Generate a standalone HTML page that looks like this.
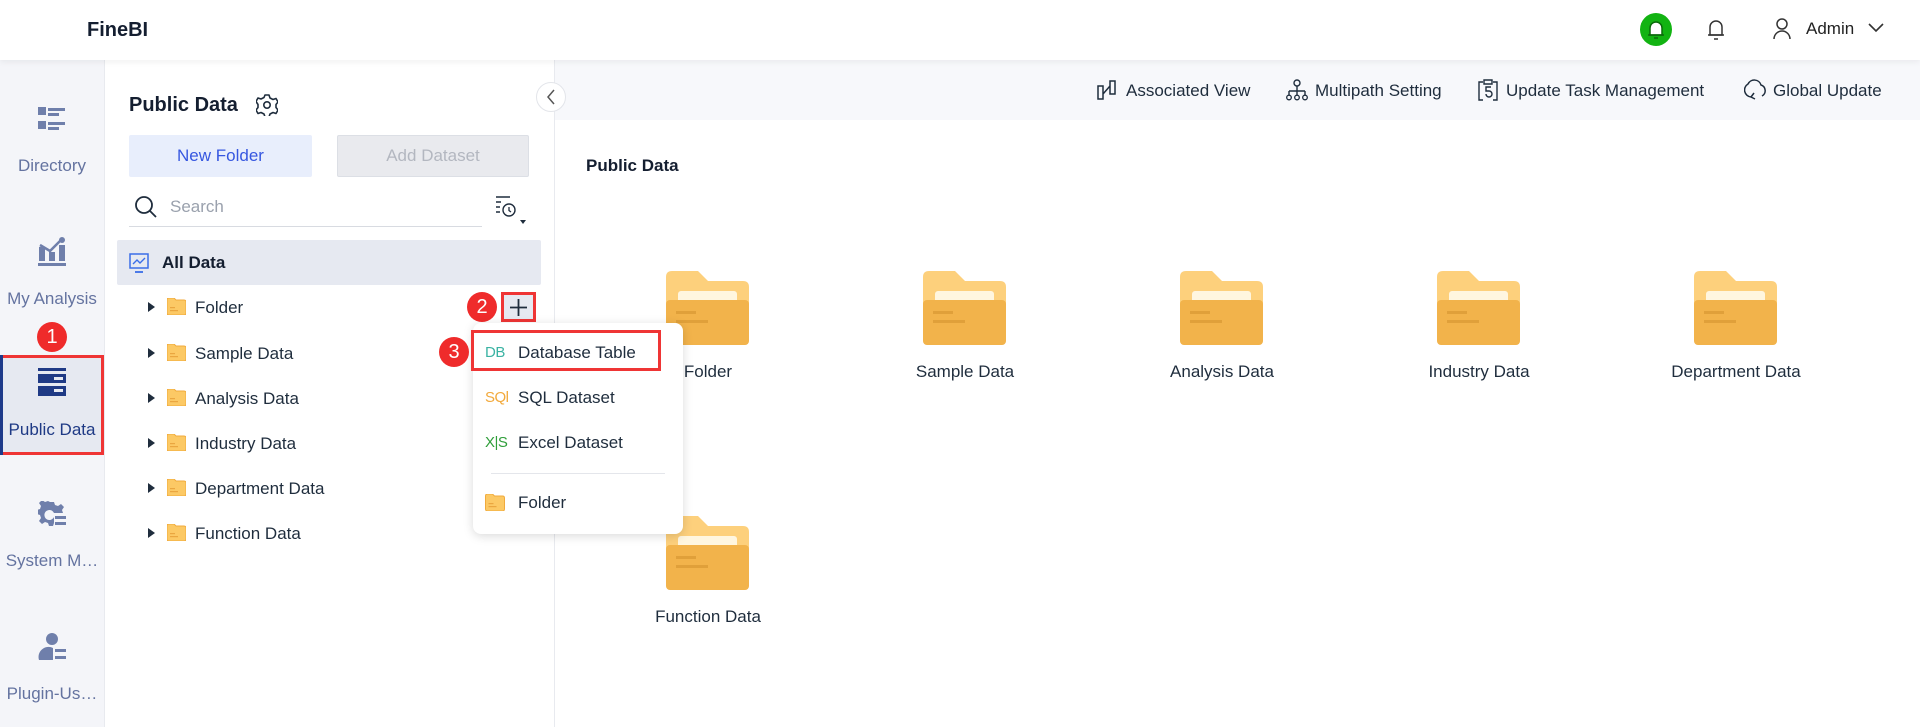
<!DOCTYPE html>
<html><head><meta charset="utf-8"><style>
*{box-sizing:border-box;margin:0;padding:0}
body{width:1920px;height:727px;overflow:hidden;background:#fff;font-family:"Liberation Sans",sans-serif;color:#1f2d3d;position:relative}
.a{position:absolute}
.t{position:absolute;white-space:nowrap;line-height:1}
.nav{left:0;top:60px;width:105px;height:667px;background:#f4f5f9;border-right:1px solid #e8eaef}
.nl{position:absolute;left:0;width:104px;text-align:center;font-size:17px;color:#6473a0;line-height:1}
.badge{position:absolute;width:30px;height:30px;border-radius:50%;background:#ef2b2b;color:#fff;font-size:20px;text-align:center;line-height:30px}
.row{position:absolute;left:150px;font-size:17px;line-height:1}
.tri{position:absolute;width:0;height:0;border-left:7px solid #1f2d3d;border-top:5px solid transparent;border-bottom:5px solid transparent}
.fl{position:absolute;text-align:center;font-size:17px;width:200px;line-height:1}
</style></head><body>
<!-- header -->
<div class="a" style="left:0;top:0;width:1920px;height:60px;background:#fff;box-shadow:0 2px 6px rgba(0,0,0,.06);z-index:2"></div>
<div class="t" style="left:87px;top:20px;font-size:20px;font-weight:bold;color:#141e30;z-index:3">FineBI</div>
<div class="a" style="left:1640px;top:13px;width:32px;height:33px;border-radius:50%;background:#12b312;z-index:3"></div>
<svg class="a" style="left:1646px;top:19px;z-index:4" width="20" height="22" viewBox="0 0 20 22"><path d="M4 16V9a6 6 0 0 1 12 0v7z" fill="#fff" stroke="#0a6a0a" stroke-width="1.5"/><path d="M2 16h16" stroke="#0a6a0a" stroke-width="1.5"/><path d="M8 19h4" stroke="#0a6a0a" stroke-width="1.5"/></svg>
<svg class="a" style="left:1706px;top:18px;z-index:4" width="20" height="24" viewBox="0 0 20 24"><path d="M4 17V9a6 6 0 0 1 12 0v8z" fill="none" stroke="#333" stroke-width="1.5"/><path d="M2 17h16M8 21h4" stroke="#333" stroke-width="1.5"/></svg>
<svg class="a" style="left:1772px;top:17px;z-index:4" width="20" height="24" viewBox="0 0 20 24"><circle cx="10" cy="7" r="5" fill="none" stroke="#333" stroke-width="1.5"/><path d="M2 22a8 8 0 0 1 16 0" fill="none" stroke="#333" stroke-width="1.5"/></svg>
<div class="t" style="left:1806px;top:20px;font-size:17px;z-index:4;color:#222">Admin</div>
<svg class="a" style="left:1868px;top:23px;z-index:4" width="16" height="10" viewBox="0 0 16 10"><path d="M1 1l7 7 7-7" fill="none" stroke="#333" stroke-width="1.6"/></svg>

<!-- left nav -->
<div class="a nav"></div>
<svg class="a" style="left:38px;top:107px" width="28" height="26" viewBox="0 0 28 26"><rect x="0" y="0" width="8" height="8" fill="#6f7fab"/><rect x="10" y="1" width="17" height="3" fill="#6f7fab"/><rect x="10" y="6" width="11" height="3" fill="#6f7fab"/><rect x="0" y="14" width="8" height="8" fill="#6f7fab"/><rect x="10" y="15" width="17" height="3" fill="#6f7fab"/><rect x="10" y="20" width="11" height="3" fill="#6f7fab"/></svg>
<div class="nl" style="top:157px">Directory</div>
<svg class="a" style="left:38px;top:237px" width="28" height="29" viewBox="0 0 28 29"><rect x="1" y="10" width="6" height="14" fill="#6f7fab"/><rect x="11" y="15" width="6" height="9" fill="#6f7fab"/><rect x="21" y="8" width="6" height="16" fill="#6f7fab"/><path d="M2 8l10 6 12-12" fill="none" stroke="#6f7fab" stroke-width="2.5"/><circle cx="24" cy="3" r="3" fill="#6f7fab"/><rect x="0" y="26" width="28" height="3" fill="#6f7fab"/></svg>
<div class="nl" style="top:290px">My Analysis</div>
<div class="badge" style="left:37px;top:322px">1</div>
<div class="a" style="left:0;top:355px;width:104px;height:100px;background:#e6e9f1;border:3px solid #ef3535;border-left:none"></div>
<div class="a" style="left:0;top:355px;width:3px;height:100px;background:#1e3a8a"></div>
<svg class="a" style="left:38px;top:368px" width="28" height="30" viewBox="0 0 28 30"><rect x="0" y="0" width="28" height="3" fill="#1f3a85"/><rect x="0" y="6" width="28" height="9" fill="#1f3a85"/><rect x="16" y="9" width="9" height="3" fill="#e6e9f1"/><rect x="0" y="18" width="28" height="10" fill="#1f3a85"/><rect x="16" y="21" width="9" height="3" fill="#e6e9f1"/></svg>
<div class="nl" style="top:421px;color:#1f3a85">Public Data</div>
<svg class="a" style="left:38px;top:501px" width="28" height="28" viewBox="0 0 28 28"><path d="M12 1h4l1 3 3 1 3-2 3 3-2 3 1 3h-9a5 5 0 1 0 0 4v6l-1 3h-4l-1-3-3-1-3 2-3-3 2-3-1-3-3-1v-4l3-1 1-3-2-3 3-3 3 2 3-1z" fill="#6f7fab"/><rect x="17" y="15" width="11" height="3" fill="#6f7fab"/><rect x="17" y="21" width="11" height="3" fill="#6f7fab"/></svg>
<div class="nl" style="top:552px">System M…</div>
<svg class="a" style="left:38px;top:633px" width="28" height="28" viewBox="0 0 28 28"><circle cx="14" cy="6" r="6" fill="#6f7fab"/><path d="M1 27a10 10 0 0 1 14-12v12z" fill="#6f7fab"/><rect x="17" y="16" width="11" height="3" fill="#6f7fab"/><rect x="17" y="23" width="11" height="3" fill="#6f7fab"/></svg>
<div class="nl" style="top:685px">Plugin-Us…</div>

<!-- second panel -->
<div class="a" style="left:554px;top:60px;width:1px;height:667px;background:#e8eaef"></div>
<div class="t" style="left:129px;top:95px;font-size:20px;font-weight:bold;color:#141e30">Public Data</div>
<svg class="a" style="left:256px;top:94px" width="22" height="22" viewBox="0 0 22 22"><path d="M9 1h4l1 3 3 1.5 3-1 2 3.5-2 2.5v3l2 2.5-2 3.5-3-1-3 1.5-1 3H9l-1-3-3-1.5-3 1-2-3.5 2-2.5v-3L0 7.5 2 4l3 1L8 3.5z" fill="none" stroke="#1f2d3d" stroke-width="1.6" stroke-linejoin="round"/><circle cx="11" cy="11" r="3.2" fill="none" stroke="#1f2d3d" stroke-width="1.6"/></svg>
<div class="a" style="left:129px;top:135px;width:183px;height:42px;background:#e8eefc;border-radius:2px;color:#3657e0;font-size:17px;text-align:center;line-height:42px">New Folder</div>
<div class="a" style="left:337px;top:135px;width:192px;height:42px;background:#e9eaee;border:1px solid #dcdfe5;border-radius:2px;color:#b3b7c0;font-size:17px;text-align:center;line-height:40px">Add Dataset</div>
<svg class="a" style="left:134px;top:195px" width="24" height="24" viewBox="0 0 24 24"><circle cx="10" cy="10" r="8" fill="none" stroke="#1f2d3d" stroke-width="1.8"/><path d="M16 16l6 6" stroke="#1f2d3d" stroke-width="1.8"/></svg>
<div class="t" style="left:170px;top:198px;font-size:17px;color:#9aa1ad">Search</div>
<div class="a" style="left:129px;top:226px;width:353px;height:1px;background:#d8dbe1"></div>
<svg class="a" style="left:496px;top:196px" width="30" height="30" viewBox="0 0 30 30"><path d="M0 1h14M0 6h5M0 11h4M0 16h4" stroke="#1f2d3d" stroke-width="1.4"/><circle cx="13" cy="14" r="6" fill="none" stroke="#1f2d3d" stroke-width="1.4"/><path d="M13 11v3.5l2 1.5" fill="none" stroke="#1f2d3d" stroke-width="1.3"/><path d="M24 24h6l-3 4z" fill="#1f2d3d"/></svg>
<div class="a" style="left:117px;top:240px;width:424px;height:45px;background:#e6e9f1;border-radius:2px"></div>
<svg class="a" style="left:129px;top:253px" width="20" height="22" viewBox="0 0 20 22"><rect x="1" y="1" width="18" height="14" fill="none" stroke="#3a6ee8" stroke-width="1.5"/><path d="M4 11l4-4 3 3 5-5" fill="none" stroke="#3a6ee8" stroke-width="1.4"/><path d="M6 19h8" stroke="#3a6ee8" stroke-width="1.8"/></svg>
<div class="t" style="left:162px;top:254px;font-size:17px;font-weight:bold;color:#141e30">All Data</div>

<!-- tree rows -->
<div id="tree"></div>
<div class="tri" style="left:148px;top:302px"></div><svg class="a" style="left:167px;top:298px" width="19" height="17" viewBox="0 0 19 17"><path d="M0 2q0-2 2-2h5l2 2h8q2 0 2 2v11q0 2-2 2H2q-2 0-2-2z" fill="#fcc965" stroke="#f0aa3c" stroke-width="1"/><rect x="3" y="9" width="5" height="1.2" fill="#eaa640"/><rect x="3" y="12" width="8" height="1.2" fill="#eaa640"/></svg><div class="t" style="left:195px;top:299px;font-size:17px">Folder</div>
<div class="tri" style="left:148px;top:348px"></div><svg class="a" style="left:167px;top:344px" width="19" height="17" viewBox="0 0 19 17"><path d="M0 2q0-2 2-2h5l2 2h8q2 0 2 2v11q0 2-2 2H2q-2 0-2-2z" fill="#fcc965" stroke="#f0aa3c" stroke-width="1"/><rect x="3" y="9" width="5" height="1.2" fill="#eaa640"/><rect x="3" y="12" width="8" height="1.2" fill="#eaa640"/></svg><div class="t" style="left:195px;top:345px;font-size:17px">Sample Data</div>
<div class="tri" style="left:148px;top:393px"></div><svg class="a" style="left:167px;top:389px" width="19" height="17" viewBox="0 0 19 17"><path d="M0 2q0-2 2-2h5l2 2h8q2 0 2 2v11q0 2-2 2H2q-2 0-2-2z" fill="#fcc965" stroke="#f0aa3c" stroke-width="1"/><rect x="3" y="9" width="5" height="1.2" fill="#eaa640"/><rect x="3" y="12" width="8" height="1.2" fill="#eaa640"/></svg><div class="t" style="left:195px;top:390px;font-size:17px">Analysis Data</div>
<div class="tri" style="left:148px;top:438px"></div><svg class="a" style="left:167px;top:434px" width="19" height="17" viewBox="0 0 19 17"><path d="M0 2q0-2 2-2h5l2 2h8q2 0 2 2v11q0 2-2 2H2q-2 0-2-2z" fill="#fcc965" stroke="#f0aa3c" stroke-width="1"/><rect x="3" y="9" width="5" height="1.2" fill="#eaa640"/><rect x="3" y="12" width="8" height="1.2" fill="#eaa640"/></svg><div class="t" style="left:195px;top:435px;font-size:17px">Industry Data</div>
<div class="tri" style="left:148px;top:483px"></div><svg class="a" style="left:167px;top:479px" width="19" height="17" viewBox="0 0 19 17"><path d="M0 2q0-2 2-2h5l2 2h8q2 0 2 2v11q0 2-2 2H2q-2 0-2-2z" fill="#fcc965" stroke="#f0aa3c" stroke-width="1"/><rect x="3" y="9" width="5" height="1.2" fill="#eaa640"/><rect x="3" y="12" width="8" height="1.2" fill="#eaa640"/></svg><div class="t" style="left:195px;top:480px;font-size:17px">Department Data</div>
<div class="tri" style="left:148px;top:528px"></div><svg class="a" style="left:167px;top:524px" width="19" height="17" viewBox="0 0 19 17"><path d="M0 2q0-2 2-2h5l2 2h8q2 0 2 2v11q0 2-2 2H2q-2 0-2-2z" fill="#fcc965" stroke="#f0aa3c" stroke-width="1"/><rect x="3" y="9" width="5" height="1.2" fill="#eaa640"/><rect x="3" y="12" width="8" height="1.2" fill="#eaa640"/></svg><div class="t" style="left:195px;top:525px;font-size:17px">Function Data</div>

<!-- plus + badges -->
<div class="badge" style="left:467px;top:292px">2</div>
<div class="a" style="left:501px;top:292px;width:35px;height:30px;border:3px solid #ef3535;background:#e6e9f1"></div>
<svg class="a" style="left:509px;top:298px" width="19" height="19" viewBox="0 0 19 19"><path d="M9.5 1v17M1 9.5h17" stroke="#1f2d3d" stroke-width="1.8"/></svg>

<!-- main area -->
<div class="a" style="left:555px;top:60px;width:1365px;height:60px;background:#f7f8fb"></div>
<div class="a" style="left:536px;top:82px;width:30px;height:30px;border-radius:50%;background:#fff;border:1px solid #e3e5ea;z-index:3"></div>
<svg class="a" style="left:546px;top:89px;z-index:4" width="10" height="16" viewBox="0 0 10 16"><path d="M8 1L2 8l6 7" fill="none" stroke="#555" stroke-width="1.5"/></svg>

<svg class="a" style="left:1097px;top:80px" width="20" height="20" viewBox="0 0 20 20"><path d="M1 6h5v13H1zM13 1h5v13h-5zM6 14L13 6" fill="none" stroke="#1f2d3d" stroke-width="1.5"/></svg>
<div class="t" style="left:1126px;top:82px;font-size:17px">Associated View</div>
<svg class="a" style="left:1286px;top:79px" width="22" height="22" viewBox="0 0 22 22"><circle cx="11" cy="4" r="3" fill="none" stroke="#1f2d3d" stroke-width="1.4"/><path d="M11 7v5M3 12h16M3 12v4M11 12v4M19 12v4" fill="none" stroke="#1f2d3d" stroke-width="1.4"/><circle cx="3" cy="18.5" r="2.3" fill="none" stroke="#1f2d3d" stroke-width="1.3"/><circle cx="11" cy="18.5" r="2.3" fill="none" stroke="#1f2d3d" stroke-width="1.3"/><circle cx="19" cy="18.5" r="2.3" fill="none" stroke="#1f2d3d" stroke-width="1.3"/></svg>
<div class="t" style="left:1315px;top:82px;font-size:17px">Multipath Setting</div>
<svg class="a" style="left:1478px;top:79px" width="20" height="22" viewBox="0 0 20 22"><path d="M5 3H1v18h4M15 3h4v18h-4M6 1h8v4H6z" fill="none" stroke="#1f2d3d" stroke-width="1.4"/><path d="M13 8H8v4h3a3 3 0 1 1-3 3" fill="none" stroke="#1f2d3d" stroke-width="1.4"/></svg>
<div class="t" style="left:1506px;top:82px;font-size:17px">Update Task Management</div>
<svg class="a" style="left:1744px;top:79px" width="22" height="22" viewBox="0 0 22 22"><path d="M7 18a7 7 0 0 1-3-13 7 7 0 0 1 13 1 6 6 0 0 1 1 11M10 14l-3 4 4 2" fill="none" stroke="#1f2d3d" stroke-width="1.5"/></svg>
<div class="t" style="left:1773px;top:82px;font-size:17px">Global Update</div>

<div class="t" style="left:586px;top:157px;font-size:17px;font-weight:bold;color:#141e30">Public Data</div>

<!-- folders -->
<svg width="0" height="0" style="position:absolute"><defs><g id="fd"><path d="M0 6q0-6 6-6h26l10 10h35q6 0 6 6v52q0 6-6 6H6q-6 0-6-6z" fill="#fdd07c"/><rect x="12" y="20" width="59" height="22" rx="3" fill="#fff6df"/><rect x="0" y="29" width="83" height="45" rx="4" fill="#f2b34b"/><rect x="10" y="40" width="20" height="3" fill="#e0a03a"/><rect x="10" y="49" width="32" height="3" fill="#e0a03a"/></g></defs></svg>
<svg class="a" style="left:666px;top:271px" width="83" height="74"><use href="#fd"/></svg>
<svg class="a" style="left:923px;top:271px" width="83" height="74"><use href="#fd"/></svg>
<svg class="a" style="left:1180px;top:271px" width="83" height="74"><use href="#fd"/></svg>
<svg class="a" style="left:1437px;top:271px" width="83" height="74"><use href="#fd"/></svg>
<svg class="a" style="left:1694px;top:271px" width="83" height="74"><use href="#fd"/></svg>
<svg class="a" style="left:666px;top:516px" width="83" height="74"><use href="#fd"/></svg>
<div class="fl" style="left:608px;top:363px">Folder</div>
<div class="fl" style="left:865px;top:363px">Sample Data</div>
<div class="fl" style="left:1122px;top:363px">Analysis Data</div>
<div class="fl" style="left:1379px;top:363px">Industry Data</div>
<div class="fl" style="left:1636px;top:363px">Department Data</div>
<div class="fl" style="left:608px;top:608px">Function Data</div>

<!-- dropdown menu -->
<div class="a" style="left:473px;top:323px;width:210px;height:211px;background:#fff;border-radius:8px;box-shadow:0 2px 10px rgba(0,0,0,.15);z-index:5"></div>
<div class="a" style="left:471px;top:330px;width:190px;height:41px;border:3px solid #ef3535;z-index:6"></div>
<div class="badge" style="left:439px;top:337px;z-index:6">3</div>
<div class="t" style="left:485px;top:345px;font-size:15px;color:#3bb3a3;z-index:6;letter-spacing:-0.5px">DB</div>
<div class="t" style="left:518px;top:344px;font-size:17px;z-index:6">Database Table</div>
<div class="t" style="left:485px;top:390px;font-size:15px;color:#f2a93b;z-index:6;letter-spacing:-0.5px">SQl</div>
<div class="t" style="left:518px;top:389px;font-size:17px;z-index:6">SQL Dataset</div>
<div class="t" style="left:485px;top:435px;font-size:15px;color:#2f9e3a;z-index:6;letter-spacing:-0.5px">X|S</div>
<div class="t" style="left:518px;top:434px;font-size:17px;z-index:6">Excel Dataset</div>
<div class="a" style="left:491px;top:473px;width:174px;height:1px;background:#e4e6eb;z-index:6"></div>
<svg class="a" style="left:485px;top:494px;z-index:6" width="20" height="17" viewBox="0 0 19 17"><path d="M0 2q0-2 2-2h5l2 2h8q2 0 2 2v11q0 2-2 2H2q-2 0-2-2z" fill="#fcc965" stroke="#f0aa3c" stroke-width="1"/><rect x="3" y="9" width="5" height="1.2" fill="#eaa640"/><rect x="3" y="12" width="8" height="1.2" fill="#eaa640"/></svg>
<div class="t" style="left:518px;top:494px;font-size:17px;z-index:6">Folder</div>
</body></html>
